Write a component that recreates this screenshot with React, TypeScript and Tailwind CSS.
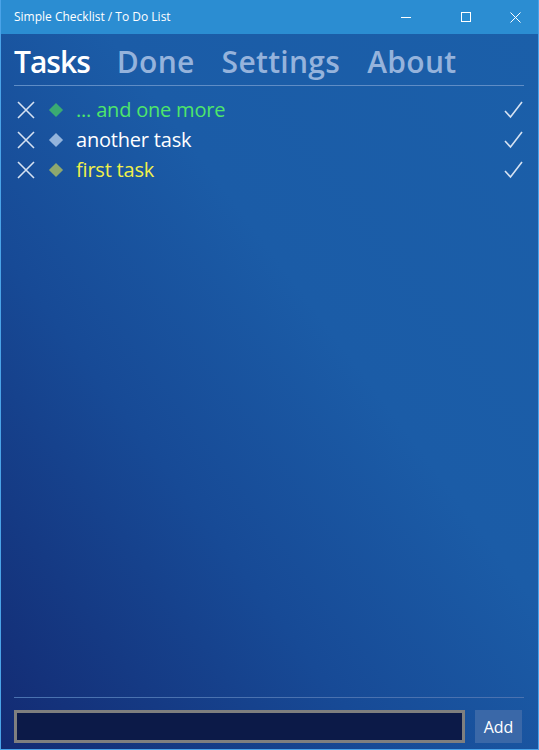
import { useState } from 'react';

interface Task {
  text: string;
  color: string;
  diamond: string;
}

const tasks: Task[] = [
  { text: '... and one more', color: 'text-[#4ee66a]', diamond: 'bg-[#3aab72]' },
  { text: 'another task', color: 'text-white', diamond: 'bg-[#93b4dc]' },
  { text: 'first task', color: 'text-[#f0f04a]', diamond: 'bg-[#8ea86e]' },
];

const tabs = ['Tasks', 'Done', 'Settings', 'About'];

function XIcon({ className = '' }: { className?: string }) {
  return (
    <svg width="20" height="20" viewBox="0 0 20 20" className={className}>
      <path d="M2 2 L18 18 M18 2 L2 18" stroke="currentColor" strokeWidth="1.6" fill="none" />
    </svg>
  );
}

function CheckIcon() {
  return (
    <svg width="20" height="20" viewBox="0 0 20 20">
      <path d="M1 11 L6.5 17 L18 2" stroke="currentColor" strokeWidth="1.6" fill="none" />
    </svg>
  );
}

export default function App() {
  const [text, setText] = useState('');

  return (
    <div
      className="w-[539px] h-[750px] flex flex-col border border-t-0 border-[#4aa3e8] overflow-hidden"
      style={{ fontFamily: '"Open Sans", "Noto Sans", sans-serif' }}
    >
      {/* title bar */}
      <div className="h-[34px] shrink-0 bg-[#2b8dd2] flex items-center text-white">
        <span className="pl-[13px] text-[12px] flex-1">Simple Checklist / To Do List</span>
        <div className="flex items-center h-full">
          <div className="w-[46px] h-full flex items-center justify-center">
            <div className="w-[10px] h-px bg-white" />
          </div>
          <div className="w-[46px] h-full flex items-center justify-center ml-[14px]">
            <div className="w-[10px] h-[10px] border border-white" />
          </div>
          <div className="w-[46px] h-full flex items-center justify-center ml-[3px]">
            <svg width="11" height="11" viewBox="0 0 11 11">
              <path d="M0.5 0.5 L10.5 10.5 M10.5 0.5 L0.5 10.5" stroke="white" strokeWidth="1" />
            </svg>
          </div>
        </div>
      </div>

      {/* body */}
      <div className="flex-1 flex flex-col pl-[13px] pr-[14px] bg-[linear-gradient(to_top_right,#132a72_0%,#174a96_35%,#1b5ca7_60%,#1b5fa9_100%)]">
        <div className="flex items-end gap-[27px] h-[52px] border-b border-[#5f8dc6] pb-[3px]">
          {tabs.map((t, i) => (
            <span
              key={t}
              className={`text-[30px] leading-[40px] font-semibold ${i === 0 ? 'text-white tracking-[-1px]' : 'text-[#95b3dc] tracking-[0.3px]'}`}
            >
              {t}
            </span>
          ))}
        </div>

        <div className="flex flex-col pt-[9px]">
          {tasks.map(t => (
            <div key={t.text} className="flex items-center h-[30px]">
              <XIcon className="text-[#d6e2f2] ml-[2px]" />
              <div className={`w-[10px] h-[10px] rotate-45 ml-[15px] ${t.diamond}`} />
              <span className={`ml-[15px] text-[20px] tracking-[-0.2px] flex-1 ${t.color}`}>{t.text}</span>
              <span className="text-[#d6e2f2]">
                <CheckIcon />
              </span>
            </div>
          ))}
        </div>

        <div className="flex-1" />

        <div className="border-t border-[#4a72b0] pt-[12px] pb-[6px] pr-[2px] flex gap-[10px]">
          <input
            value={text}
            onChange={e => setText(e.target.value)}
            className="flex-1 h-[33px] bg-[#0c1a48] border-[3px] border-[#7f7f7f] outline-none text-white px-2"
          />
          <button className="w-[47px] h-[33px] bg-[#3a68a8] text-white text-[16px]">Add</button>
        </div>
      </div>
    </div>
  );
}
